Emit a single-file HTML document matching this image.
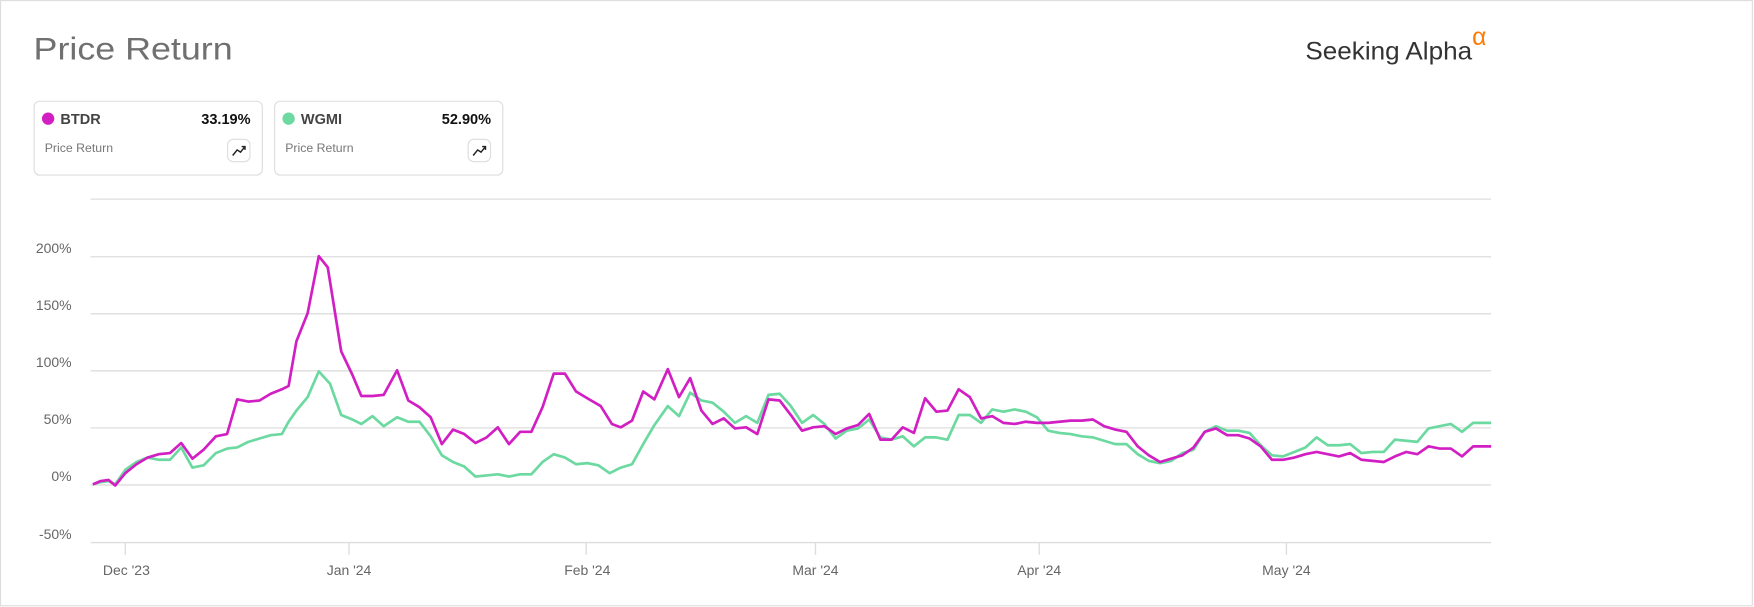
<!DOCTYPE html>
<html><head><meta charset="utf-8"><style>
html,body{margin:0;padding:0;background:#fff;width:1754px;height:607px;overflow:hidden}
svg{display:block}
text{font-family:"Liberation Sans",Arial,sans-serif}
</style></head><body>
<svg width="1754" height="607" viewBox="0 0 1568 542.6" xmlns="http://www.w3.org/2000/svg">
<rect x="0.5" y="0.5" width="1566" height="541" fill="#fff" stroke="#ddd" stroke-width="1"/>
<text x="30" y="53" font-size="28" fill="#707070" textLength="178" lengthAdjust="spacingAndGlyphs">Price Return</text>
<text x="1167" y="53" font-size="22" fill="#333" textLength="149" lengthAdjust="spacingAndGlyphs">Seeking Alpha</text>
<text x="1316" y="40" font-size="22" fill="#ff7a00" font-family="DejaVu Sans">α</text>
<!-- cards -->
<rect x="30.5" y="90.5" width="204" height="66" rx="5" fill="#fff" stroke="#ddd"/>
<circle cx="43" cy="106" r="5.5" fill="#d21fc4"/>
<text x="54" y="111" font-size="13" font-weight="bold" fill="#444">BTDR</text>
<text x="224" y="111" font-size="13" font-weight="bold" fill="#111" text-anchor="end">33.19%</text>
<text x="40" y="136" font-size="11" fill="#777">Price Return</text>
<rect x="203.5" y="124.5" width="20" height="20" rx="5" fill="#fff" stroke="#ddd"/>
<path d="M208 139 L212 134 L215 136 L219 131 M216 131 H219 V134" fill="none" stroke="#222" stroke-width="1.3"/>
<rect x="245.5" y="90.5" width="204" height="66" rx="5" fill="#fff" stroke="#ddd"/>
<circle cx="258" cy="106" r="5.5" fill="#6cd9a0"/>
<text x="269" y="111" font-size="13" font-weight="bold" fill="#444">WGMI</text>
<text x="439" y="111" font-size="13" font-weight="bold" fill="#111" text-anchor="end">52.90%</text>
<text x="255" y="136" font-size="11" fill="#777">Price Return</text>
<rect x="418.5" y="124.5" width="20" height="20" rx="5" fill="#fff" stroke="#ddd"/>
<path d="M423 139 L427 134 L430 136 L434 131 M431 131 H434 V134" fill="none" stroke="#222" stroke-width="1.3"/>
<!-- grid -->
<g stroke="#ddd" stroke-width="1.2">
<line x1="81" x2="1333" y1="178" y2="178"/>
<line x1="81" x2="1333" y1="229.5" y2="229.5"/>
<line x1="81" x2="1333" y1="280.5" y2="280.5"/>
<line x1="81" x2="1333" y1="331.5" y2="331.5"/>
<line x1="81" x2="1333" y1="382.5" y2="382.5"/>
<line x1="81" x2="1333" y1="433.5" y2="433.5"/>
<line x1="81" x2="1333" y1="485" y2="485"/>
<line x1="112" x2="112" y1="485" y2="496"/>
<line x1="312" x2="312" y1="485" y2="496"/>
<line x1="524" x2="524" y1="485" y2="496"/>
<line x1="729" x2="729" y1="485" y2="496"/>
<line x1="929" x2="929" y1="485" y2="496"/>
<line x1="1150" x2="1150" y1="485" y2="496"/>
</g>
<g font-size="12.5" fill="#666" text-anchor="end">
<text x="64" y="226">200%</text>
<text x="64" y="277">150%</text>
<text x="64" y="328">100%</text>
<text x="64" y="379">50%</text>
<text x="64" y="430">0%</text>
<text x="64" y="482">-50%</text>
</g>
<g font-size="12.5" fill="#666" text-anchor="middle">
<text x="113" y="514">Dec '23</text>
<text x="312" y="514">Jan '24</text>
<text x="525" y="514">Feb '24</text>
<text x="729" y="514">Mar '24</text>
<text x="929" y="514">Apr '24</text>
<text x="1150" y="514">May '24</text>
</g>
<polyline fill="none" stroke="#6cd9a0" stroke-width="2.4" stroke-linejoin="round" points="83,433 90,431 97,430 103,433 112,420 122,413 132,409 142,411 152,411 162,400 172,418 182,416 193,405 203,401 212,400 222,395 232,392 242,389 252,388 258,377 265,367 275,355 285,332 295,343 305,371 315,375 323,379 333,372 343,381 355,373 365,377 375,377 385,390 395,407 405,413 415,417 425,426 435,425 445,424 455,426 465,424 475,424 485,413 495,406 505,409 515,415 525,414 535,416 545,423 555,418 565,415 575,397 585,380 597,363 607,372 617,351 627,358 637,360 647,368 657,378 667,372 677,378 687,353 697,352 707,363 717,378 727,371 737,379 747,392 757,385 767,383 777,375 787,391 797,393 807,390 817,399 827,391 837,391 847,393 857,371 867,371 877,378 887,366 897,368 907,366 917,368 927,373 937,385 947,387 957,388 967,390 977,391 987,394 997,397 1007,397 1017,406 1027,412 1037,414 1047,412 1057,405 1067,402 1077,386 1087,381 1097,385 1107,385 1117,387 1127,398 1137,407 1147,408 1157,404 1167,400 1177,391 1187,398 1197,398 1207,397 1217,405 1227,404 1237,404 1247,393 1257,394 1267,395 1277,383 1287,381 1297,379 1307,386 1317,378 1333,378"/>
<polyline fill="none" stroke="#d21fc4" stroke-width="2.4" stroke-linejoin="round" points="83,433 90,430 97,429 103,434 112,423 122,415 132,409 142,406 152,405 162,396 172,410 182,402 193,390 203,388 212,357 222,359 232,358 242,352 252,348 258,345 265,305 275,280 285,229 293,239 305,314 315,335 323,354 333,354 343,353 355,331 365,358 375,364 385,373 395,397 405,384 415,388 425,396 435,391 445,382 455,397 465,386 475,386 485,364 495,334 505,334 515,350 525,356 537,363 547,379 555,382 565,376 575,350 585,357 597,330 607,355 617,338 627,367 637,379 647,374 657,383 667,382 677,388 687,357 697,358 707,371 717,385 727,382 737,381 747,388 757,383 767,380 777,370 787,393 797,393 807,382 817,387 827,356 837,368 847,367 857,348 867,355 877,374 887,372 897,378 907,379 917,377 927,378 937,378 947,377 957,376 967,376 977,375 987,381 997,384 1007,386 1017,399 1027,407 1037,413 1047,410 1057,407 1067,400 1077,386 1087,383 1097,389 1107,389 1117,392 1127,399 1137,411 1147,411 1157,409 1167,406 1177,404 1187,406 1197,408 1207,405 1217,411 1227,412 1237,413 1247,408 1257,404 1267,406 1277,399 1287,401 1297,401 1307,408 1317,399 1333,399"/>
</svg>
</body></html>
